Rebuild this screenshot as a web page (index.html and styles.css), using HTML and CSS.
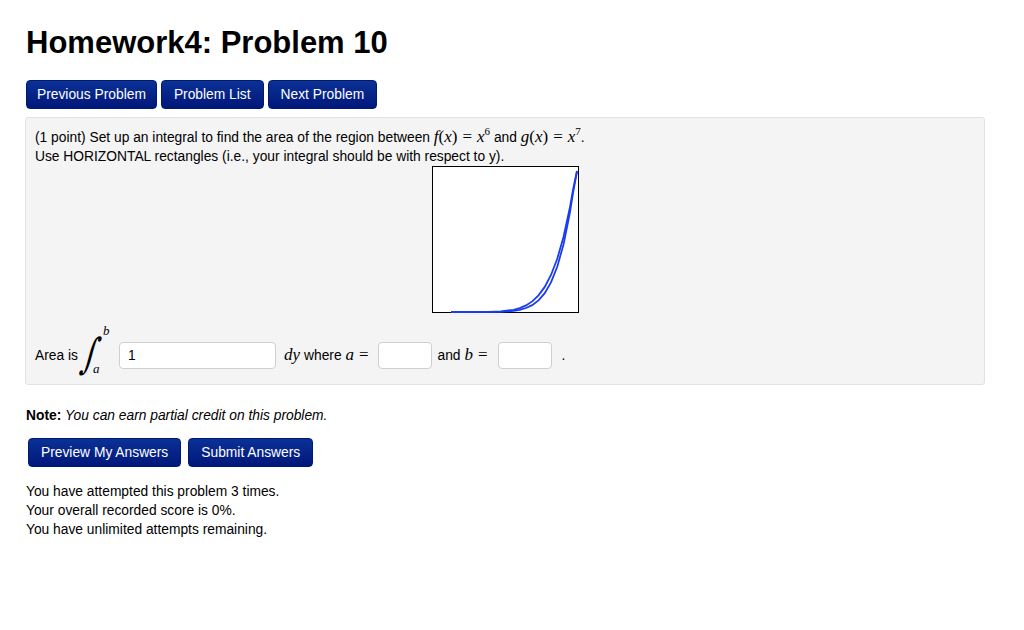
FILE: index.html
```html
<!DOCTYPE html>
<html>
<head>
<meta charset="utf-8">
<link rel="stylesheet" href="styles.css">
</head>
<body>
<h1 class="title">Homework4: Problem 10</h1>
<div class="nav">
  <button class="btn prev">Previous Problem</button>
  <button class="btn">Problem List</button>
  <button class="btn">Next Problem</button>
</div>
<div class="problem">
  <div class="text">(1 point) Set up an integral to find the area of the region between <span class="m"><i>f</i>(<i>x</i>)<span class="eq">=</span><i>x</i><sup>6</sup></span> and <span class="m"><i>g</i>(<i>x</i>)<span class="eq">=</span><i>x</i><sup>7</sup></span>.</div>
  <div class="text">Use HORIZONTAL rectangles (i.e., your integral should be with respect to y).</div>
  <div class="graph-wrap">
    <svg class="graph" width="147" height="147" viewBox="0 0 147 147">
      <rect x="0.5" y="0.5" width="146" height="146" fill="#fff" stroke="#000" stroke-width="1"/>
      <polyline fill="none" stroke="#1a3cf0" stroke-width="1.8" points="19,146 44,146 56.5,145.9 69,145.4 81.5,143.8 87.75,142.1 94,139.4 100.25,135.4 106.5,129.4 112.75,120.9 119,109 125.25,92.8 131.5,71 137.75,42.3 141,24 145,5"/>
      <polyline fill="none" stroke="#1a3cf0" stroke-width="1.8" points="19,146 69,145.8 81.5,144.9 87.75,143.8 94,142 100.25,139.1 106.5,134.4 112.75,127.2 119,116.4 125.25,100.8 131.5,78.5 137.75,47.5 141,27 145,5"/>
    </svg>
  </div>
  <div class="answer">
    <span>Area is</span>
    <span class="integral"><span class="intsign">∫</span><span class="ub">b</span><span class="lb">a</span></span>
    <input class="inp wide" type="text" value="1">
    <span class="m dy"><i>dy</i></span><span class="where">where <span class="m"><i>a</i><span class="eq">=</span></span></span>
    <input class="inp small" type="text">
    <span>and <span class="m"><i>b</i><span class="eq">=</span></span></span>
    <input class="inp small" type="text">
    <span class="dot">.</span>
  </div>
</div>
<p class="note"><b>Note:</b> <i>You can earn partial credit on this problem.</i></p>
<div class="actions">
  <button class="btn big">Preview My Answers</button>
  <button class="btn big">Submit Answers</button>
</div>
<div class="status">
  <div>You have attempted this problem 3 times.</div>
  <div>Your overall recorded score is 0%.</div>
  <div>You have unlimited attempts remaining.</div>
</div>
</body>
</html>
```
FILE: styles.css
```css
html, body {
  margin: 0;
  padding: 0;
  background: #fff;
}
body {
  font-family: "Liberation Sans", Arial, sans-serif;
  font-size: 13.8px;
  color: #000;
  padding: 0 26px;
}
.title {
  font-size: 31px;
  font-weight: bold;
  line-height: 34px;
  margin: 0;
  padding-top: 26px;
  height: 54px;
}
.nav {
  display: flex;
  gap: 4px;
}
.btn {
  font-family: "Liberation Sans", Arial, sans-serif;
  font-size: 13.8px;
  color: #fff;
  background: linear-gradient(#0b3196, #00177a);
  border: 1px solid #001a6e;
  border-radius: 4px;
  height: 29px;
  padding: 0 12px;
  margin: 0;
  cursor: pointer;
}
.btn.prev {
  padding: 0 10px;
}
.problem {
  margin-top: 8px;
  margin-left: -1px;
  width: 949px;
  background: #f4f4f4;
  border: 1px solid #e2e2e2;
  border-radius: 3px;
  padding: 9px 0 0 9px;
  box-sizing: content-box;
  height: 257px;
}
.text {
  line-height: 20px;
  height: 20px;
}
.m {
  font-family: "Liberation Serif", "Times New Roman", serif;
  font-size: 17px;
}
.eq {
  margin: 0 5px;
}
.m sup {
  font-size: 11px;
  line-height: 0;
  vertical-align: 7px;
}
.graph-wrap {
  display: flex;
  justify-content: center;
  margin-top: -1px;
  padding-right: 9px;
}
.graph {
  display: block;
}
.answer {
  display: flex;
  align-items: center;
  margin-top: 28px;
  height: 28px;
}
.integral {
  position: relative;
  display: inline-block;
  width: 28px;
  height: 40px;
  margin-left: 4px;
  margin-right: 9px;
}
.intsign {
  position: absolute;
  left: -2px;
  top: -6px;
  font-family: "DejaVu Serif", serif;
  font-size: 42px;
  line-height: 50px;
  transform: skewX(-14deg) scaleX(0.7);
}
.ub {
  position: absolute;
  left: 21px;
  top: -12px;
  font-family: "Liberation Serif", serif;
  font-style: italic;
  font-size: 13px;
}
.lb {
  position: absolute;
  left: 11px;
  top: 26px;
  font-family: "Liberation Serif", serif;
  font-style: italic;
  font-size: 13px;
}
.inp {
  font-family: "Liberation Sans", Arial, sans-serif;
  font-size: 13.8px;
  height: 27px;
  box-sizing: border-box;
  border: 1px solid #cfcfcf;
  border-radius: 4px;
  background: #fff;
  padding: 0 8px;
  margin: 0;
}
.wide {
  width: 157px;
  margin-right: 8px;
}
.small {
  width: 54px;
  margin: 0 6px;
}
.where {
  margin-left: 4px;
}
.where .eq {
  margin-right: 3px;
}
.dot {
  margin-left: 3px;
}
.note {
  margin: 22px 0 0 0;
  line-height: 18px;
}
.actions {
  display: flex;
  gap: 7px;
  margin-top: 13px;
  padding-left: 2px;
}
.big {
  padding: 0 12px;
}
.status {
  margin-top: 15px;
  line-height: 19px;
}
```
